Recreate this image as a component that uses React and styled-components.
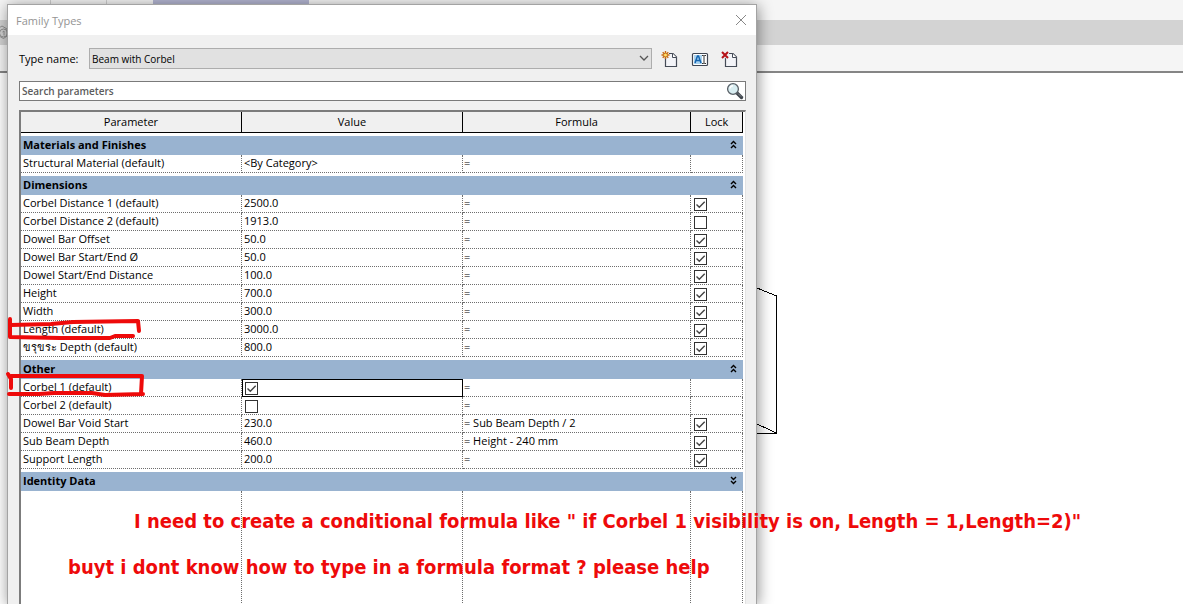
import React, { useState } from 'react';
import styled, { createGlobalStyle } from 'styled-components';

const GlobalStyle = createGlobalStyle`
    * {
        box-sizing: border-box;
    }
    body {
        margin: 0;
        font-family: 'Open Sans', 'Noto Sans', sans-serif;
        font-size: 11px;
        color: #000;
        background: #fff;
    }
`;

const Page = styled.div`
    position: relative;
    min-height: 100vh;
    overflow: hidden;
`;

const TabStrip = styled.div`
    display: grid;
    grid-template-columns: 51px 56px 46px 156px 1fr;
    height: 20px;
    background: #f5f5f5;
`;

const Tab = styled.div`
    border-right: ${p => (p.$divided ? '1px solid #d0d0d0' : 'none')};
    border-top: ${p => (p.$active ? '5px solid #b4b6d2' : 'none')};
`;

const OptionsBar = styled.div`
    display: flex;
    align-items: center;
    height: 25px;
    background: #d3d3d3;
`;

const ViewBar = styled.div`
    height: 28px;
    background: #f5f5f5;
    border-bottom: 2px solid #858585;
`;

const Beam = styled.svg`
    position: absolute;
    left: 64%;
    top: 286px;
`;

const Dialog = styled.section`
    position: absolute;
    left: 7px;
    right: 36%;
    top: 4px;
    bottom: 0;
    display: flex;
    flex-direction: column;
    background: #f0f0f0;
    border: 1px solid #a3a3a3;
    border-bottom: none;
    box-shadow: 1px 2px 14px rgba(0, 0, 0, 0.45);
`;

const TitleBar = styled.header`
    display: flex;
    flex: none;
    align-items: center;
    justify-content: space-between;
    height: 30px;
    padding: 0 8px;
    background: #fff;
`;

const Title = styled.h1`
    margin: 0;
    font-size: 11px;
    font-weight: 400;
    color: #949494;
`;

const IconButton = styled.button`
    display: flex;
    align-items: center;
    justify-content: center;
    padding: 0;
    border: none;
    background: none;
`;

const Body = styled.div`
    display: flex;
    flex-direction: column;
    flex: 1;
    gap: 9px;
    min-height: 0;
    padding: 12px 10px 0 11px;
`;

const TypeRow = styled.div`
    display: flex;
    flex: none;
    align-items: center;
    height: 25px;
    padding-bottom: 2px;
`;

const TypeLabel = styled.label`
    width: 70px;
`;

const SelectBox = styled.div`
    display: grid;
    flex: 1;
    align-items: center;
    & > * {
        grid-area: 1 / 1;
    }
    svg {
        justify-self: end;
        margin-right: 3px;
        pointer-events: none;
    }
`;

const Select = styled.select`
    width: 100%;
    height: 21px;
    padding: 0 2px;
    appearance: none;
    border: 1px solid #adadad;
    border-radius: 0;
    background: #e1e1e1;
    color: #000;
    font-family: inherit;
    font-size: 10px;
`;

const Tools = styled.div`
    display: flex;
    gap: 12px;
    padding: 0 7px 0 9px;
`;

const SearchBox = styled.div`
    display: flex;
    flex: none;
    align-items: center;
    height: 20px;
    padding-right: 1px;
    background: #fff;
    border: 1px solid #7a7a7a;
`;

const SearchInput = styled.input`
    flex: 1;
    min-width: 0;
    height: 16px;
    padding: 0 2px;
    border: none;
    outline: none;
    background: none;
    font-family: inherit;
    font-size: 10px;
    &::placeholder {
        color: #5c5c5c;
        font-weight: 600;
        opacity: 1;
    }
`;

const GridFrame = styled.div`
    display: flex;
    flex-direction: column;
    flex: 1;
    min-height: 0;
    padding-right: 2px;
    background: #fff;
    border-top: 2px solid #7c7c7c;
    border-left: 2px solid #7c7c7c;
    border-right: 1px solid #e3e3e3;
`;

const Table = styled.table`
    flex: none;
    width: 100%;
    table-layout: fixed;
    border-collapse: separate;
    border-spacing: 0;
`;

const Col = styled.col`
    width: ${p => p.$w};
`;

const HeadCell = styled.th`
    height: 21px;
    padding: 0;
    font-weight: 400;
    line-height: 18px;
    background: #f0f0f0;
    border-right: 1px solid #000;
    border-bottom: 1px solid #000;
`;

const GroupCell = styled.th`
    height: 22px;
    padding: 0;
    border-top: 3px solid #fff;
    background: #99b3d0;
    text-align: left;
    vertical-align: top;
`;

const GroupInner = styled.div`
    display: flex;
    align-items: center;
    justify-content: space-between;
    height: 17px;
    padding: 0 6px 0 2px;
`;

const Cell = styled.td`
    height: 18px;
    padding: 0 2px;
    line-height: 16px;
    vertical-align: top;
    white-space: nowrap;
    overflow: hidden;
    border-right: 1px dotted #6e6e6e;
    border-bottom: ${p => (p.$blank ? 'none' : '1px dotted #6e6e6e')};
    outline: ${p => (p.$selected ? '1px solid #000' : 'none')};
    outline-offset: -1px;
`;

const FormulaCell = styled(Cell)`
    padding: 0 1px;
`;

const BlankCell = styled(Cell)`
    height: 120px;
`;

const Check = styled.span`
    display: grid;
    width: 13px;
    height: 13px;
    margin: 3px 0 1px 1px;
    & > * {
        grid-area: 1 / 1;
    }
    svg {
        display: none;
        pointer-events: none;
    }
    input:checked + svg {
        display: block;
    }
`;

const CheckInput = styled.input`
    appearance: none;
    width: 13px;
    height: 13px;
    margin: 0;
    background: #fff;
    border: 1px solid #333;
`;

const Marks = styled.svg`
    position: absolute;
    left: 0;
    top: 310px;
    pointer-events: none;
`;

const Note = styled.p`
    position: absolute;
    left: ${p => p.$left};
    top: ${p => p.$top};
    margin: 0;
    font-family: 'DejaVu Sans Condensed', 'DejaVu Sans', sans-serif;
    font-size: 20px;
    font-weight: 700;
    line-height: 24px;
    white-space: nowrap;
    color: #ee0a0a;
`;

const groups = [
    {
        name: 'Materials and Finishes',
        rows: [{ name: 'Structural Material (default)', value: '<By Category>' }],
    },
    {
        name: 'Dimensions',
        rows: [
            { name: 'Corbel Distance 1 (default)', value: '2500.0', lock: true },
            { name: 'Corbel Distance 2 (default)', value: '1913.0', lock: false },
            { name: 'Dowel Bar Offset', value: '50.0', lock: true },
            { name: 'Dowel Bar Start/End Ø', value: '50.0', lock: true },
            { name: 'Dowel Start/End Distance', value: '100.0', lock: true },
            { name: 'Height', value: '700.0', lock: true },
            { name: 'Width', value: '300.0', lock: true },
            { name: 'Length (default)', value: '3000.0', lock: true },
            { name: 'ขรุขระ Depth (default)', value: '800.0', lock: true },
        ],
    },
    {
        name: 'Other',
        rows: [
            { name: 'Corbel 1 (default)', value: true, selected: true },
            { name: 'Corbel 2 (default)', value: false },
            { name: 'Dowel Bar Void Start', value: '230.0', formula: 'Sub Beam Depth / 2', lock: true },
            { name: 'Sub Beam Depth', value: '460.0', formula: 'Height - 240 mm', lock: true },
            { name: 'Support Length', value: '200.0', lock: true },
        ],
    },
    { name: 'Identity Data', collapsed: true, rows: [] },
];

const CheckBox = ({ label, initial }) => {
    const [on, setOn] = useState(initial);
    return (
        <Check>
            <CheckInput type="checkbox" aria-label={label} checked={on} onChange={() => setOn(!on)} />
            <svg width="13" height="13" viewBox="0 0 13 13" fill="none" stroke="#444" strokeWidth="1.4">
                <path d="M2.5 6.5l2.8 2.8 5.4-5.6" />
            </svg>
        </Check>
    );
};

const Chevrons = ({ down }) => (
    <svg width="7" height="9" viewBox="0 0 7 9" fill="none" stroke="#000" strokeWidth="1.4">
        {down ? <path d="M1 1l2.5 2.5L6 1M1 5l2.5 2.5L6 5" /> : <path d="M1 4l2.5-2.5L6 4M1 8l2.5-2.5L6 8" />}
    </svg>
);

const PageShape = () => (
    <>
        <path d="M4.5 6.5v10h11v-9.5l-3.5-3.5h-4" fill="#f3f4f8" stroke="#454b57" strokeWidth="1.2" />
        <path d="M11.5 3.5v4h4" fill="#fff" stroke="#454b57" />
    </>
);

const NewIcon = () => (
    <svg width="18" height="18" viewBox="0 0 18 18">
        <PageShape />
        <path d="M4.5 1v8M.5 5h8M1.7 2.2l5.6 5.6M7.3 2.2l-5.6 5.6" stroke="#c66a12" strokeWidth="1.4" />
        <circle cx="4.5" cy="5" r="1.5" fill="#ffe26a" />
    </svg>
);

const RenameIcon = () => (
    <svg width="18" height="18" viewBox="0 0 18 18">
        <rect x="1.5" y="3.5" width="15" height="12" rx="1" fill="#fff" stroke="#3f4653" strokeWidth="1.2" />
        <rect x="3" y="5" width="8" height="9" fill="#a9d3f0" />
        <path d="M4 13l2.5-7h1L10 13M5 10.5h4" fill="none" stroke="#1565b0" strokeWidth="1.5" />
        <path d="M11 5.5h1.5l.5.5.5-.5H15M13 6v7M11 13.5h1.5l.5-.5.5.5H15" fill="none" stroke="#333" />
    </svg>
);

const DeleteIcon = () => (
    <svg width="18" height="18" viewBox="0 0 18 18">
        <PageShape />
        <path d="M1 2l6 6M7 2L1 8" stroke="#f0f0f0" strokeWidth="3.5" />
        <path d="M1 2l6 6M7 2L1 8" stroke="#b51218" strokeWidth="2" />
    </svg>
);

const SearchIcon = () => (
    <svg width="18" height="18" viewBox="0 0 18 18">
        <path d="M10.5 10.5l5 5" stroke="#3f454c" strokeWidth="3.4" strokeLinecap="round" />
        <path d="M12 11.5l3 3" stroke="#8b9096" />
        <circle cx="7" cy="7" r="5.4" fill="#d9eef2" stroke="#596067" strokeWidth="1.3" />
        <path d="M4 6.5a3.2 3.2 0 0 1 3-2.7" fill="none" stroke="#fff" strokeWidth="1.5" />
    </svg>
);

const ParameterRow = ({ row }) => (
    <tr>
        <Cell>{row.name}</Cell>
        <Cell $selected={row.selected}>
            {typeof row.value === 'boolean' ? <CheckBox label={row.name} initial={row.value} /> : row.value}
        </Cell>
        <FormulaCell>= {row.formula}</FormulaCell>
        <Cell>{row.lock !== undefined && <CheckBox label={`Lock ${row.name}`} initial={row.lock} />}</Cell>
    </tr>
);

export default () => (
    <Page>
        <GlobalStyle />
        <TabStrip>
            <Tab $divided />
            <Tab $divided />
            <Tab />
            <Tab $active />
        </TabStrip>
        <OptionsBar>
            <svg width="10" height="16" viewBox="0 0 10 16" fill="none" stroke="#909090">
                <path d="M-2 3.5L2 1l5 3v7l-3.5 2.5L-1 11" />
                <circle cx="3.5" cy="8" r="4" />
                <path d="M2.5 7l1.5-1v4.5" />
            </svg>
        </OptionsBar>
        <ViewBar />
        <Beam width="22" height="150" viewBox="0 0 22 150" fill="none" stroke="#000" shapeRendering="crispEdges">
            <path d="M0 2l19.5 8v137L0 138M0 147.5h19.5" />
        </Beam>
        <Dialog aria-label="Family Types">
            <TitleBar>
                <Title>Family Types</Title>
                <IconButton aria-label="Close">
                    <svg width="14" height="14" viewBox="0 0 14 14" stroke="#888">
                        <path d="M2 2l10 10M12 2L2 12" />
                    </svg>
                </IconButton>
            </TitleBar>
            <Body>
                <TypeRow>
                    <TypeLabel htmlFor="type-name">Type name:</TypeLabel>
                    <SelectBox>
                        <Select id="type-name">
                            <option>Beam with Corbel</option>
                        </Select>
                        <svg width="10" height="7" viewBox="0 0 10 7" fill="none" stroke="#555" strokeWidth="1.3">
                            <path d="M1 1l4 4 4-4" />
                        </svg>
                    </SelectBox>
                    <Tools>
                        <IconButton aria-label="New type"><NewIcon /></IconButton>
                        <IconButton aria-label="Rename type"><RenameIcon /></IconButton>
                        <IconButton aria-label="Delete type"><DeleteIcon /></IconButton>
                    </Tools>
                </TypeRow>
                <SearchBox>
                    <SearchInput aria-label="Search parameters" placeholder="Search parameters" />
                    <SearchIcon />
                </SearchBox>
                <GridFrame>
                    <Table>
                        <colgroup>
                            <Col $w="30.6%" />
                            <Col $w="30.6%" />
                            <Col />
                            <Col $w="52px" />
                        </colgroup>
                        <thead>
                            <tr>
                                <HeadCell>Parameter</HeadCell>
                                <HeadCell>Value</HeadCell>
                                <HeadCell>Formula</HeadCell>
                                <HeadCell>Lock</HeadCell>
                            </tr>
                        </thead>
                        {groups.map(g => (
                            <tbody key={g.name}>
                                <tr>
                                    <GroupCell colSpan={4}>
                                        <GroupInner>
                                            {g.name}
                                            <Chevrons down={g.collapsed} />
                                        </GroupInner>
                                    </GroupCell>
                                </tr>
                                {g.rows.map(r => <ParameterRow key={r.name} row={r} />)}
                            </tbody>
                        ))}
                        <tbody>
                            <tr>
                                <BlankCell $blank />
                                <BlankCell $blank />
                                <BlankCell $blank />
                                <BlankCell $blank />
                            </tr>
                        </tbody>
                    </Table>
                </GridFrame>
            </Body>
        </Dialog>
        <Marks width="150" height="90" viewBox="0 310 150 90" fill="none" stroke="#ee0a0a" strokeWidth="4" strokeLinecap="round" strokeLinejoin="round">
            <path d="M10 319v18M11 325l40-1 22-2 65-1 1 10M10 337l50 1h50l5-2h18" />
            <path d="M8 374l3 5v9M11 376h131l-1 18M9 394h30l15-1h38l13 2 38-1" />
        </Marks>
        <Note $left="134px" $top="509px">
            I need to create a conditional formula like " if Corbel 1 visibility is on, Length = 1,Length=2)"
        </Note>
        <Note $left="68px" $top="555px">buyt i dont know how to type in a formula format ? please help</Note>
    </Page>
);
